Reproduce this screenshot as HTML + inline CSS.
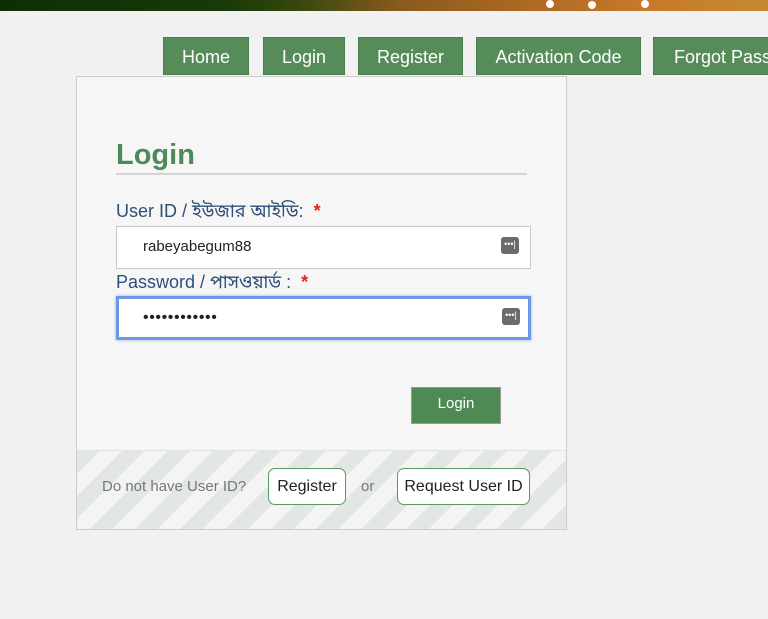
<!DOCTYPE html>
<html><head><meta charset="utf-8"><style>
*{box-sizing:border-box;margin:0;padding:0}
body{width:768px;height:619px;overflow:hidden;background:#f1f1f1;font-family:"Liberation Sans",sans-serif;position:relative}
.top{position:absolute;left:0;top:0;width:768px;height:11px;background:linear-gradient(90deg,#0e2e06 0%,#1a3a08 30%,#3b4a10 40%,#8a5a1c 52%,#b06a24 70%,#c87a2a 85%,#c48a30 100%)}
.dot{position:absolute;top:0;width:8px;height:8px;border-radius:50%;background:#fff}
.nav{position:absolute;top:37px;height:38px;background:#558c5a;color:#fff;font-size:18px;line-height:38px;text-align:center;border:1px solid #4a7d4f;white-space:nowrap;overflow:hidden}
.panel{position:absolute;left:76px;top:76px;width:491px;height:454px;background:#f6f6f6;border:1px solid #ccc}
h1{position:absolute;left:116px;top:139px;font-size:29px;color:#4e8a57;font-weight:bold}
.rule{position:absolute;left:116px;top:173px;width:411px;height:2px;background:#d4d4d4}
.lbl{position:absolute;left:116px;font-size:18px;color:#2e4f78;font-family:"Liberation Sans","Noto Sans Bengali","Lohit Bengali",sans-serif}
.lbl b{color:#e2231a;font-weight:bold;margin-left:10px}
.inp{position:absolute;left:116px;width:415px;background:#fff;border:1px solid #c8c8c8;font-size:15px;color:#222}
.inp span{position:absolute;left:26px}
.key{position:absolute;right:11px;width:18px;height:17px;background:#6b6b6b;border-radius:3px;color:#fff;font-size:9px;line-height:14px;text-align:center}
.btn{position:absolute;left:411px;top:387px;width:90px;height:37px;background:#4f8a55;border:1px solid #999;color:#fff;font-size:15px;text-align:center;line-height:32px}
.foot{position:absolute;left:77px;top:450px;width:489px;height:79px;border-top:1px solid #e2e2e2;background:repeating-linear-gradient(135deg,#e2e6e4 0 16px,#f4f4f4 16px 32px)}
.ob{position:absolute;top:468px;height:37px;background:#fff;border:1px solid #5a9a5e;border-radius:7px;font-size:16px;color:#222;line-height:35px;text-align:center}
.t{position:absolute;font-size:15px;color:#777}
</style></head><body>
<div class="top"></div>
<div class="dot" style="left:546px;top:0"></div><div class="dot" style="left:588px;top:1px"></div><div class="dot" style="left:641px;top:0"></div>
<div class="nav" style="left:163px;width:86px">Home</div>
<div class="nav" style="left:263px;width:82px">Login</div>
<div class="nav" style="left:358px;width:105px">Register</div>
<div class="nav" style="left:476px;width:165px">Activation Code</div>
<div class="nav" style="left:653px;width:130px;text-align:left;padding-left:20px">Forgot Password</div>
<div class="panel"></div>
<h1>Login</h1>
<div class="rule"></div>
<div class="lbl" style="top:201px">User ID / ইউজার আইডি:<b>*</b></div>
<div class="inp" style="top:226px;height:43px"><span style="top:11px">rabeyabegum88</span><div class="key" style="top:10px">•••|</div></div>
<div class="lbl" style="top:272px">Password / পাসওয়ার্ড :<b>*</b></div>
<div class="inp" style="top:296px;height:44px;border:3px solid #6b97e6;box-shadow:0 0 3px #8ab0f0"><span style="top:10px;left:24px;font-size:16px;letter-spacing:0.6px">••••••••••••</span><div class="key" style="top:9px;right:8px">•••|</div></div>
<div class="btn">Login</div>
<div class="foot"></div>
<div class="t" style="left:102px;top:478px">Do not have User ID?</div>
<div class="ob" style="left:268px;width:78px">Register</div>
<div class="t" style="left:361px;top:478px">or</div>
<div class="ob" style="left:397px;width:133px">Request User ID</div>
</body></html>
